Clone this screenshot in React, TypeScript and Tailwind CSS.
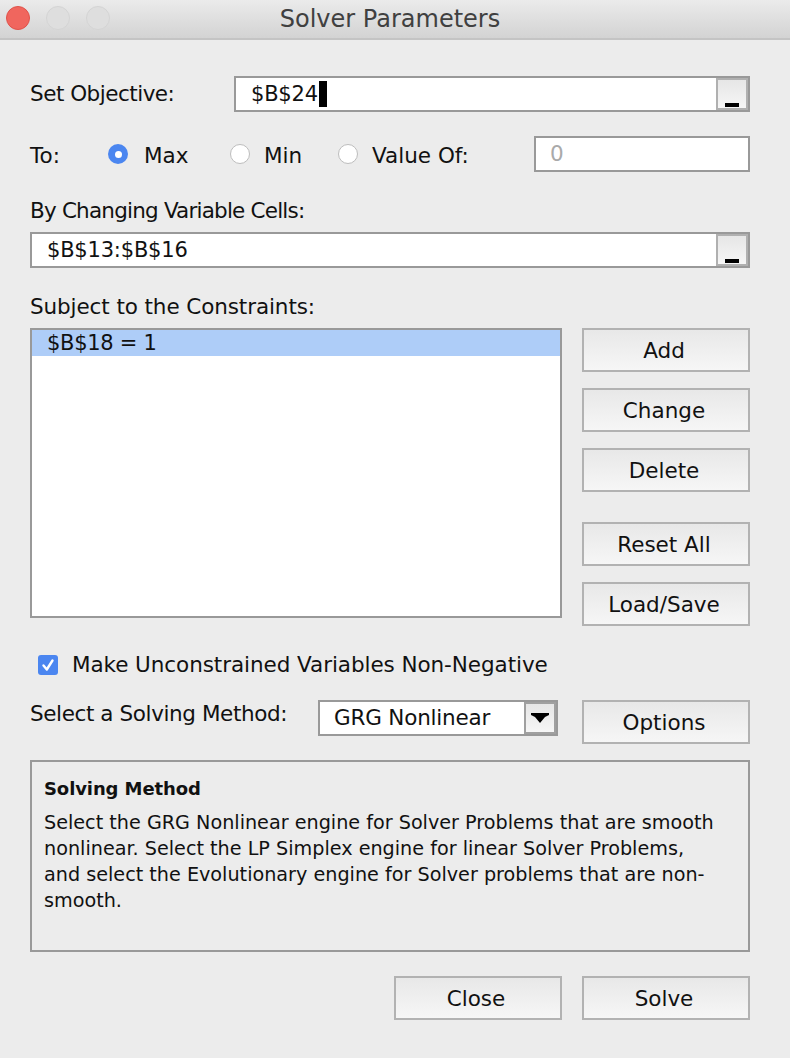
const font = "font-['DejaVu_Sans',sans-serif]";

function Btn({ label, className = '' }: { label: string; className?: string }) {
  return (
    <button className={`w-[168px] h-11 border-[2px] border-[#b2b2b2] bg-gradient-to-b from-[#e8e8e8] to-[#f6f6f6] pr-1 pt-[1px] text-[21.5px] text-[#111] ${className}`}>
      {label}
    </button>
  );
}

function RefField({ value, cursor }: { value: string; cursor?: boolean }) {
  return (
    <div className="flex h-9 flex-1 border-[2px] border-[#999] bg-white">
      <div className="flex flex-1 items-center pl-[15px] text-[21px] text-[#111] tracking-[-0.2px]">
        {value}
        {cursor && <span className="ml-[1px] h-[26px] w-2 bg-black" />}
      </div>
      <div className="flex w-8 items-end justify-center border-[2px] border-[#b0b0b0] bg-gradient-to-b from-[#e6e6e6] to-[#f6f6f6] pb-[1px]">
        <span className="h-1 w-[14px] bg-black" />
      </div>
    </div>
  );
}

function Radio({ checked }: { checked?: boolean }) {
  if (checked) {
    return (
      <span className="flex h-5 w-5 items-center justify-center rounded-full bg-[#4b86f0]">
        <span className="h-[7px] w-[7px] rounded-full bg-white" />
      </span>
    );
  }
  return <span className="h-5 w-5 rounded-full border border-[#bdbdbd] bg-white" />;
}

export default function App() {
  return (
    <div className={`${font} h-[1058px] w-[790px] overflow-hidden bg-[#ececec] text-[21.5px] leading-none text-[#111]`}>
      <div className="relative flex h-10 items-center justify-center border-b-[2px] border-[#c4c4c4] bg-gradient-to-b from-[#ebebeb] to-[#d3d3d3] pr-[10px]">
        <div className="absolute left-[6px] top-[6px] flex gap-4">
          <span className="h-6 w-6 rounded-full border border-[#e0524a] bg-[#f0665e]" />
          <span className="h-6 w-6 rounded-full border border-[#d4d4d4] bg-[#dedede]" />
          <span className="h-6 w-6 rounded-full border border-[#d4d4d4] bg-[#dedede]" />
        </div>
        <span className="text-[24px] text-[#404040]">Solver Parameters</span>
      </div>

      <div className="flex flex-col pl-[30px] pr-[40px]">
        <div className="mt-9 flex items-center">
          <span className="w-[204px] tracking-[-0.5px]">Set Objective:</span>
          <RefField value="$B$24" cursor />
        </div>

        <div className="mt-6 flex h-9 items-center">
          <span className="w-[78px] pt-[3px]">To:</span>
          <Radio checked />
          <span className="ml-4 w-[86px] pt-[4px]">Max</span>
          <Radio />
          <span className="ml-[14px] w-[74px] pt-[4px]">Min</span>
          <Radio />
          <span className="ml-[14px] w-[162px] pt-[4px]">Value Of:</span>
          <div className="flex h-9 flex-1 items-center border-[2px] border-[#999] bg-white pl-[14px] text-[#aaa]">0</div>
        </div>

        <div className="mt-[28px] h-[23px] tracking-[-0.8px]">By Changing Variable Cells:</div>
        <div className="mt-[9px] flex">
          <RefField value="$B$13:$B$16" />
        </div>

        <div className="mt-[28px] h-[23px] tracking-[-0.1px]">Subject to the Constraints:</div>
        <div className="mt-[9px] flex gap-5">
          <div className="h-[290px] w-[532px] border-[2px] border-[#999] bg-white">
            <div className="flex h-[26px] items-center bg-[#aecdf8] pl-[15px] pt-[1px] text-[21px] tracking-[-0.3px]">$B$18 = 1</div>
          </div>
          <div className="flex flex-col">
            <Btn label="Add" />
            <Btn label="Change" className="mt-4" />
            <Btn label="Delete" className="mt-4" />
            <Btn label="Reset All" className="mt-[30px]" />
            <Btn label="Load/Save" className="mt-4" />
          </div>
        </div>

        <div className="mt-[29px] flex h-5 items-center pl-2">
          <span className="flex h-5 w-5 items-center justify-center rounded-[3px] bg-[#4b86f0]">
            <svg viewBox="0 0 20 20" className="h-5 w-5" fill="none" stroke="white" strokeWidth="2.4" strokeLinecap="round" strokeLinejoin="round">
              <path d="M5.5 10.5 L8.8 14.5 L14.5 5.5" />
            </svg>
          </span>
          <span className="ml-[14px] tracking-[-0.07px]">Make Unconstrained Variables Non-Negative</span>
        </div>

        <div className="mt-[25px] flex items-start">
          <span className="mt-[3px] w-[288px] tracking-[-0.4px]">Select a Solving Method:</span>
          <div className="flex h-9 w-[240px] border-[2px] border-[#999] bg-white">
            <span className="flex flex-1 items-center pl-[14px] tracking-[-0.2px]">GRG Nonlinear</span>
            <span className="flex w-8 items-center justify-center border-[2px] border-[#a0a0a0] bg-gradient-to-b from-[#e6e6e6] to-[#f6f6f6]">
              <svg viewBox="0 0 18 10" className="h-[10px] w-[18px]">
                <path d="M0 0 H18 V2 L14 4 L9 10 L4 4 L0 2 Z" fill="#000" />
              </svg>
            </span>
          </div>
          <Btn label="Options" className="ml-6" />
        </div>

        <div className="mt-4 h-[192px] border-[2px] border-[#999] px-3 pt-[15px]">
          <div className="text-[18px] font-bold leading-[24px] tracking-[-0.1px]">Solving Method</div>
          <p className="mt-[9px] pr-4 text-[19.2px] leading-[26px]">
            Select the GRG Nonlinear engine for Solver Problems that are smooth nonlinear. Select the LP Simplex engine for linear Solver Problems, and select the Evolutionary engine for Solver problems that are non-smooth.
          </p>
        </div>

        <div className="mt-6 flex justify-end gap-5">
          <Btn label="Close" />
          <Btn label="Solve" />
        </div>
      </div>
    </div>
  );
}
